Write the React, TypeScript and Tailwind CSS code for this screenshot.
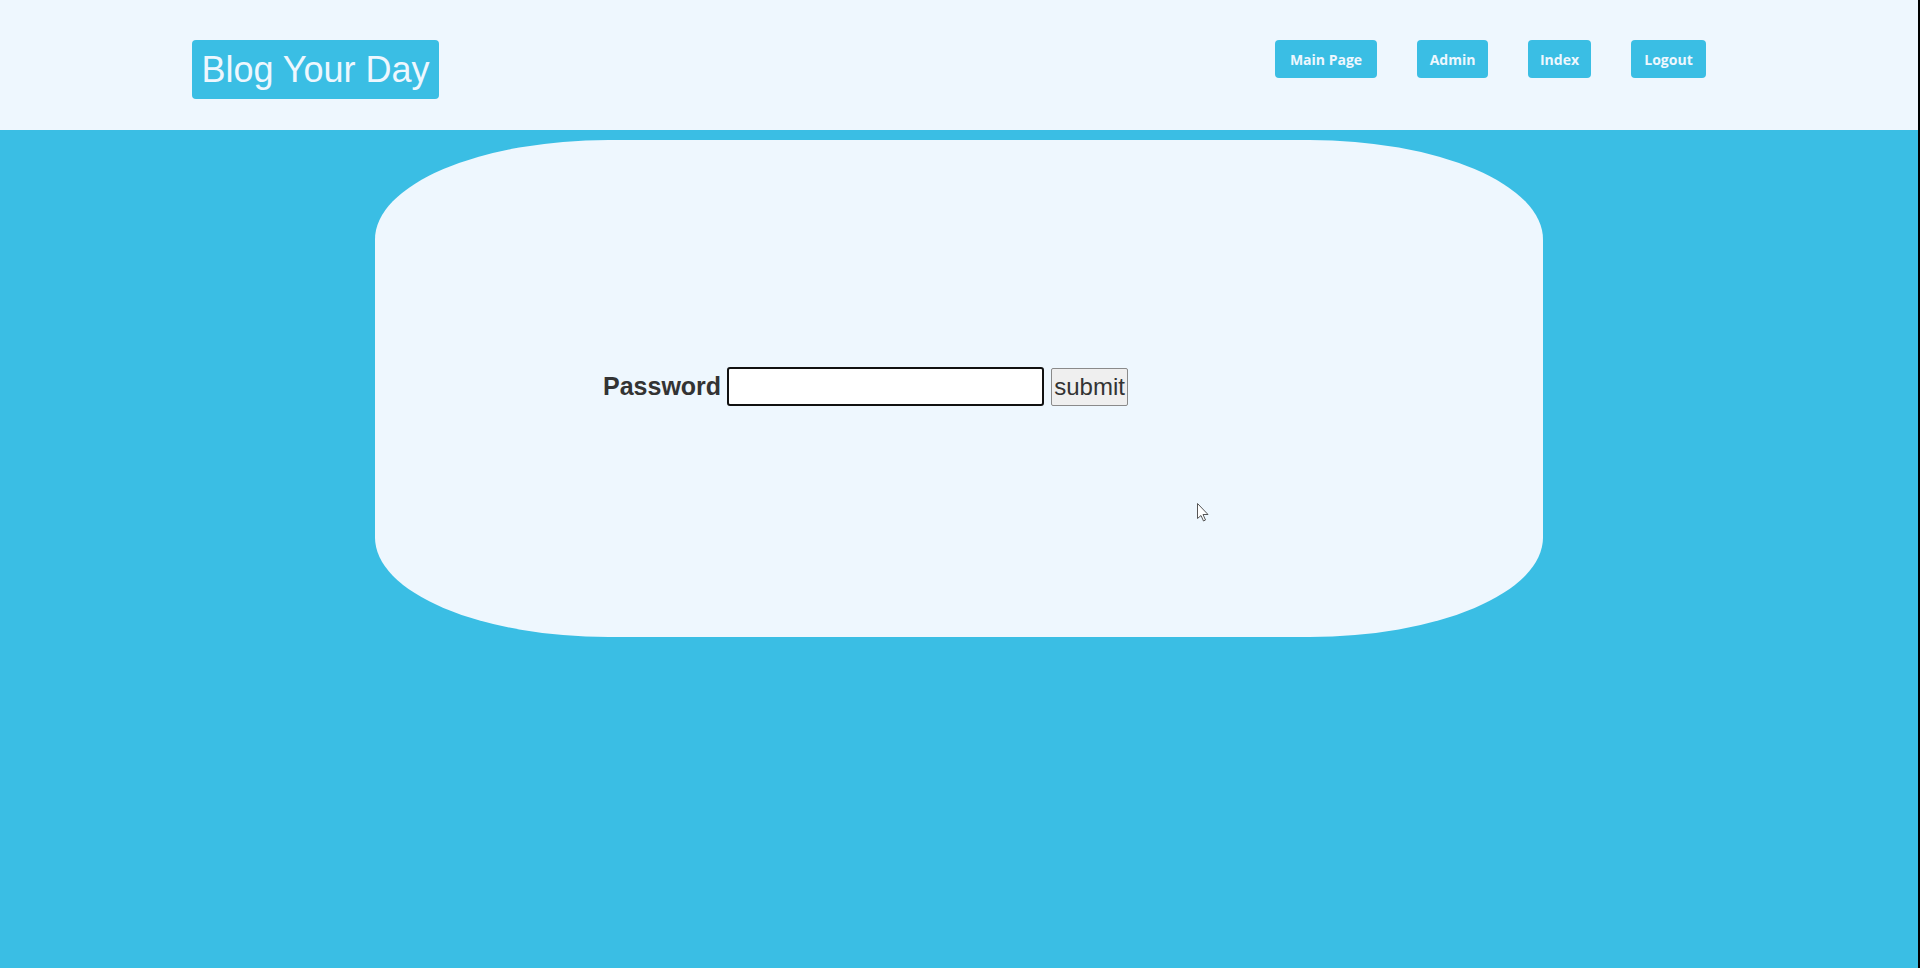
import React from "react";

export default function App() {
  const navs = [
    { label: "Main Page", w: "w-[102px]" },
    { label: "Admin", w: "w-[71px]" },
    { label: "Index", w: "w-[63px]" },
    { label: "Logout", w: "w-[75px]" },
  ];
  return (
    <div className="flex w-[1920px] h-[968px] overflow-hidden">
      <div className="relative flex flex-col w-[1918px] h-[968px] bg-[#3abee4]">
        <header className="flex h-[130px] shrink-0 items-start justify-between bg-[#eef7fe] pl-[192px] pr-[212px] pt-[40px]">
          <div className="flex h-[59px] w-[247px] items-center justify-center rounded-[4px] bg-[#3abee4] text-[36px] text-[#eef7fe] leading-none [font-family:'Liberation_Sans',Arial,sans-serif]">
            Blog Your Day
          </div>
          <nav className="flex gap-[40px]">
            {navs.map((n) => (
              <a
                key={n.label}
                className={`flex h-[38px] ${n.w} items-center justify-center rounded-[4px] bg-[#3abee4] text-[14px] font-bold text-[#eef7fe] [font-family:'Open_Sans',sans-serif]`}
              >
                {n.label}
              </a>
            ))}
          </nav>
        </header>
        <main className="pt-[10px]">
          <div className="mx-auto flex h-[497px] w-[1168px] items-center rounded-[20%] bg-[#eef7fe] pb-[4px] pl-[228px] [font-family:'Liberation_Sans',Arial,sans-serif]">
            <label className="text-[25px] font-bold text-[#333333] leading-none">Password</label>
            <input
              type="password"
              className="ml-[6px] h-[39px] w-[317px] rounded-[3px] border-2 border-[#111111] bg-white outline-none"
            />
            <button className="ml-[7px] h-[38px] w-[77px] rounded-[2px] border border-[#8a8a8a] bg-[#efefef] text-[24px] text-[#333333] leading-none">
              submit
            </button>
          </div>
        </main>
        <svg
          className="absolute left-[1197px] top-[503px]"
          width="12"
          height="19"
          viewBox="0 0 12 19"
        >
          <path
            d="M0.5 0.5 L0.5 15.5 L4 12.5 L6.5 18 L8.5 17 L6 11.5 L11 11.5 Z"
            fill="#ffffff"
            stroke="#555555"
            strokeWidth="1"
            strokeLinejoin="round"
          />
        </svg>
      </div>
      <div className="h-[968px] w-[2px] bg-black" />
    </div>
  );
}
